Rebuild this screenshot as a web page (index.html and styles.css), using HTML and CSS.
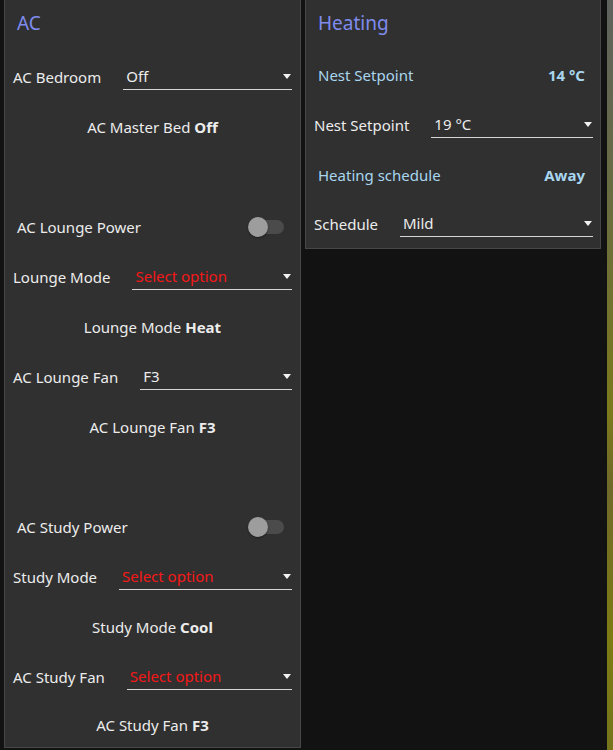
FILE: index.html
```html
<!DOCTYPE html>
<html lang="en">
<head>
  <meta charset="UTF-8">
  <title>Climate</title>
  <link rel="stylesheet" href="styles.css">
</head>
<body>
  <div class="view">
    <div class="card card-ac">
      <div class="card-title">AC</div>

      <div class="row select-row">
        <span class="label">AC Bedroom</span>
        <div class="select"><span>Off</span><i class="arrow"></i></div>
      </div>
      <div class="row attr">AC Master Bed&nbsp;<b>Off</b></div>
      <div class="row spacer"></div>

      <div class="row toggle-row">
        <span class="label">AC Lounge Power</span>
        <div class="toggle"><span class="knob"></span></div>
      </div>
      <div class="row select-row">
        <span class="label">Lounge Mode</span>
        <div class="select empty"><span>Select option</span><i class="arrow"></i></div>
      </div>
      <div class="row attr">Lounge Mode&nbsp;<b>Heat</b></div>
      <div class="row select-row">
        <span class="label">AC Lounge Fan</span>
        <div class="select"><span>F3</span><i class="arrow"></i></div>
      </div>
      <div class="row attr">AC Lounge Fan&nbsp;<b>F3</b></div>
      <div class="row spacer"></div>

      <div class="row toggle-row">
        <span class="label">AC Study Power</span>
        <div class="toggle"><span class="knob"></span></div>
      </div>
      <div class="row select-row">
        <span class="label">Study Mode</span>
        <div class="select empty"><span>Select option</span><i class="arrow"></i></div>
      </div>
      <div class="row attr">Study Mode&nbsp;<b>Cool</b></div>
      <div class="row select-row">
        <span class="label">AC Study Fan</span>
        <div class="select empty"><span>Select option</span><i class="arrow"></i></div>
      </div>
      <div class="row attr last">AC Study Fan&nbsp;<b>F3</b></div>
    </div>

    <div class="card card-heat">
      <div class="card-title">Heating</div>

      <div class="row state-row">
        <span class="label">Nest Setpoint</span>
        <b class="value">14 °C</b>
      </div>
      <div class="row select-row">
        <span class="label">Nest Setpoint</span>
        <div class="select"><span>19 °C</span><i class="arrow"></i></div>
      </div>
      <div class="row state-row">
        <span class="label">Heating schedule</span>
        <b class="value">Away</b>
      </div>
      <div class="row select-row last">
        <span class="label">Schedule</span>
        <div class="select"><span>Mild</span><i class="arrow"></i></div>
      </div>
    </div>

    <div class="strip"></div>
  </div>
</body>
</html>
```

FILE: styles.css
```css
* {
  margin: 0;
  padding: 0;
  box-sizing: border-box;
}

html, body {
  height: 100%;
  background-color: #121212;
}

body {
  font-family: "Noto Sans", "Open Sans", sans-serif;
  font-size: 15px;
  color: #ececec;
  overflow: hidden;
}

.view {
  display: flex;
  align-items: flex-start;
  height: 750px;
  padding-left: 4px;
}

.card {
  background-color: #303030;
  border: 1px solid #474747;
  border-top: none;
}

.card-ac {
  width: 297px;
}

.card-heat {
  width: 296px;
  margin-left: 4px;
}

.card-title {
  height: 52px;
  padding: 9px 12px 0;
  font-size: 19px;
  line-height: 28px;
  color: #7f8ced;
}

.card-heat .card-title {
  height: 50px;
}

.row {
  display: flex;
  align-items: center;
  height: 50px;
}

.select-row {
  padding: 0 8px;
}

.select-row .label {
  margin-right: 22px;
  white-space: nowrap;
}

.select {
  flex: 1;
  display: flex;
  align-items: center;
  height: 24px;
  padding: 0 1px 0 3px;
  border-bottom: 1px solid #d6d6d6;
  margin-bottom: -2px;
}

.select span {
  flex: 1;
  line-height: 20px;
  padding-bottom: 4px;
}

.select.empty span {
  color: #f51818;
}

.arrow {
  width: 0;
  height: 0;
  border-left: 4.5px solid transparent;
  border-right: 4.5px solid transparent;
  border-top: 5px solid #f2f2f2;
  margin-top: -3px;
}

.attr {
  justify-content: center;
}

.attr.last {
  height: 45px;
  align-items: flex-start;
  padding-top: 13px;
}

.toggle-row {
  justify-content: space-between;
  padding: 0 16px 0 12px;
}

.toggle {
  position: relative;
  width: 34px;
  height: 14px;
  border-radius: 7px;
  background-color: #4b4b4b;
}

.toggle .knob {
  position: absolute;
  left: -2px;
  top: -3px;
  width: 20px;
  height: 20px;
  border-radius: 50%;
  background-color: #9d9d9d;
  box-shadow: 0 1px 2px rgba(0, 0, 0, 0.4);
}

.state-row {
  justify-content: space-between;
  padding: 0 15px 0 12px;
  color: #a9d6ef;
}

.state-row .value {
  font-weight: 700;
}

.card-heat .select-row {
  padding: 0 7px 0 8px;
}

.card-heat .select-row.last {
  height: 48px;
}

.strip {
  width: 6px;
  height: 750px;
  margin-left: auto;
  background: linear-gradient(#5d625e, #6b6e3c 30%, #7b7a1c 55%, #6f6a2a 65%, #7d7c14 85%, #75761c);
}
```
